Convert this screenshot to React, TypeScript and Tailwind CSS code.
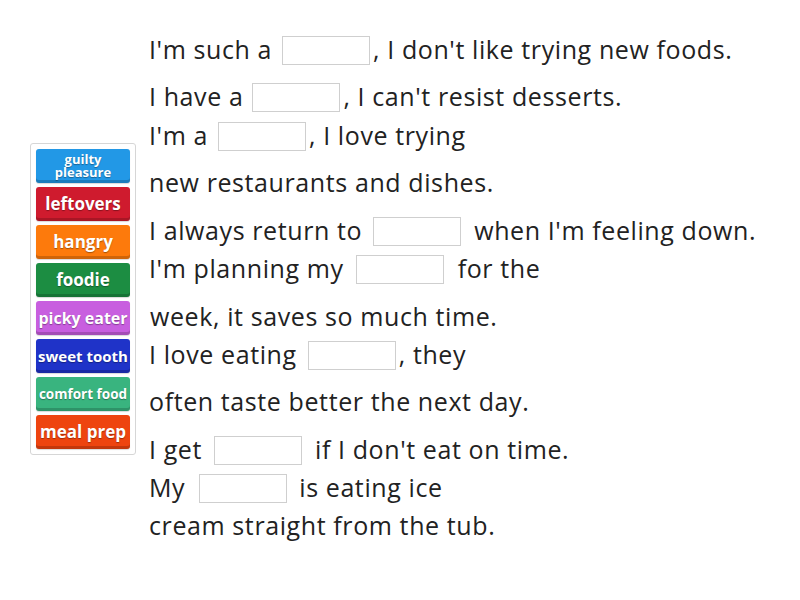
type Tile = { label: string; className: string; text: string };

const tiles: Tile[] = [
  { label: 'guilty pleasure', className: 'bg-[#2298e6]', text: 'text-[13px] leading-[13px] px-4' },
  { label: 'leftovers', className: 'bg-[#cf1b2e]', text: 'text-[17px]' },
  { label: 'hangry', className: 'bg-[#fd7a0c]', text: 'text-[17px]' },
  { label: 'foodie', className: 'bg-[#1c8d42]', text: 'text-[17px]' },
  { label: 'picky eater', className: 'bg-[#c85fdf]', text: 'text-[16px]' },
  { label: 'sweet tooth', className: 'bg-[#1f33c8]', text: 'text-[15px]' },
  { label: 'comfort food', className: 'bg-[#39b47f]', text: 'text-[13.5px]' },
  { label: 'meal prep', className: 'bg-[#ee440f]', text: 'text-[17px]' },
];

const Blank = ({ className }: { className: string }) => (
  <span className={`inline-block h-[29px] w-[88px] shrink-0 border border-[#cfcfcf] bg-white ${className}`} />
);

const Line = ({ className, children }: { className?: string; children: React.ReactNode }) => (
  <div className={`flex h-[38px] items-center whitespace-pre ${className ?? ''}`}>{children}</div>
);

export default function App() {
  return (
    <div
      className="flex h-[600px] w-[800px] items-start bg-white text-[#222]"
      style={{ fontFamily: '"Open Sans", sans-serif' }}
    >
      <div className="ml-[30px] mt-[143px] flex w-[106px] flex-col gap-[4px] rounded-[3px] border border-[#d6d6d6] p-[5px]">
        {tiles.map((t) => (
          <div
            key={t.label}
            className={`flex h-[34px] items-center justify-center rounded-[3px] text-center font-bold text-white shadow-[inset_0_-3px_0_rgba(0,0,0,0.18),0_1px_1px_rgba(0,0,0,0.15)] ${t.className}`}
          >
            <span className={`${t.text} [text-shadow:0_1px_1px_rgba(0,0,0,0.35)]`}>{t.label}</span>
          </div>
        ))}
      </div>

      <div className="ml-[13px] mt-[31px] flex flex-col text-[25px] tracking-[0.6px]">
        <Line>
          I'm such a<Blank className="ml-[10px]" />
          <span className="ml-[3px]">, I don't like trying new foods.</span>
        </Line>
        <Line className="mt-[9px]">
          I have a<Blank className="ml-[9px]" />
          <span className="ml-[3px]">, I can't resist desserts.</span>
        </Line>
        <Line className="mt-[1px]">
          I'm a<Blank className="ml-[10px]" />
          <span className="ml-[3px]">, I love trying</span>
        </Line>
        <Line className="mt-[9px]">new restaurants and dishes.</Line>
        <Line className="mt-[10px]">
          I always return to<Blank className="ml-[11px]" />
          <span className="ml-[13px]">when I'm feeling down.</span>
        </Line>
        <Line>
          I'm planning my<Blank className="ml-[12px]" />
          <span className="ml-[14px]">for the</span>
        </Line>
        <Line className="mt-[10px] pl-[1px]">week, it saves so much time.</Line>
        <Line>
          I love eating<Blank className="ml-[11px]" />
          <span className="ml-[3px]">, they</span>
        </Line>
        <Line className="mt-[9px]">often taste better the next day.</Line>
        <Line className="mt-[10px]">
          I get<Blank className="ml-[12px]" />
          <span className="ml-[13px]">if I don't eat on time.</span>
        </Line>
        <Line>
          My<Blank className="ml-[14px]" />
          <span className="ml-[12px]">is eating ice</span>
        </Line>
        <Line>cream straight from the tub.</Line>
      </div>
    </div>
  );
}
